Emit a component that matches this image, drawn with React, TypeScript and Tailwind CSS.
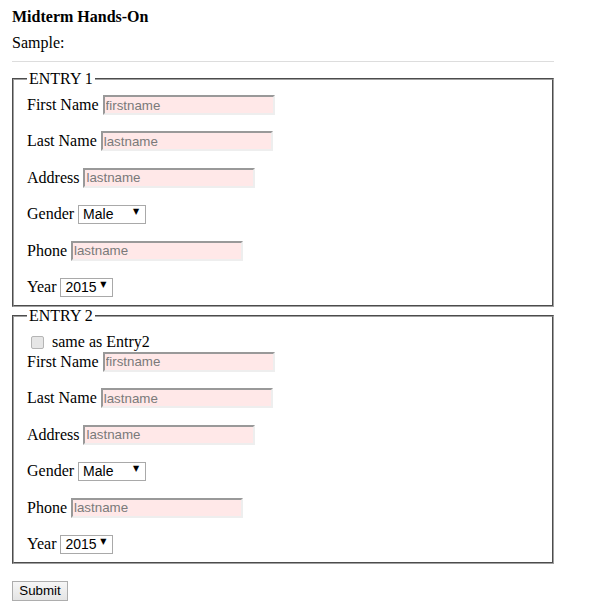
import React from "react";

const inputCls =
  "h-[20px] border-2 border-t-[#999] border-l-[#999] border-b-[#eee] border-r-[#eee] bg-[#ffe8e8] px-[1px] text-[13.33px] text-black placeholder:text-[#7a7a7a] outline-none [font-family:'Liberation_Sans',Arial,sans-serif]";

function TextRow({label, placeholder}: {label: string; placeholder: string}) {
  return (
    <div className="flex items-center gap-[4px] h-[20px]">
      <label className="leading-[18px]">{label}</label>
      <input type="text" placeholder={placeholder} className={inputCls + " w-[172px]"}/>
    </div>
  );
}

function SelectRow({label, options, width}: {label: string; options: string[]; width: string}) {
  return (
    <div className="flex items-center gap-[4px] h-[20px]">
      <label className="leading-[18px]">{label}</label>
      <div className="relative">
        <select
          className={
            "appearance-none h-[19px] border border-[#a9a9a9] bg-white pl-[4px] text-[14px] leading-[17px] text-black outline-none [font-family:'Liberation_Sans',Arial,sans-serif] " +
            width
          }
        >
          {options.map((o) => (
            <option key={o}>{o}</option>
          ))}
        </select>
        <span className="pointer-events-none absolute right-[7px] top-[5px] text-[8px] leading-[10px] text-black [font-family:'DejaVu_Sans',sans-serif]">
          ▼
        </span>
      </div>
    </div>
  );
}

function Entry({title, withCheck}: {title: string; withCheck?: boolean}) {
  return (
    <fieldset className="border-2 [border-style:groove] border-[#a0a0a0] px-[13px] pt-[7px] pb-[8px]">
      <legend className="px-[2px] leading-[18px]">{title}</legend>
      {withCheck && (
        <div className="flex items-center h-[19px] mt-[1px]">
          <input
            type="checkbox"
            className="appearance-none ml-[4px] mr-[8px] w-[13px] h-[13px] rounded-[2px] border border-[#b5b5b5] bg-[#e6e6e6]"
          />
          <span className="leading-[18px]">same as Entry2</span>
        </div>
      )}
      <div className="flex flex-col gap-[16.4px]">
        <TextRow label="First Name" placeholder="firstname"/>
        <TextRow label="Last Name" placeholder="lastname"/>
        <TextRow label="Address" placeholder="lastname"/>
        <SelectRow label="Gender" options={["Male", "Female"]} width="w-[68px]"/>
        <TextRow label="Phone" placeholder="lastname"/>
        <SelectRow label="Year" options={["2015", "2016", "2017"]} width="w-[53px]"/>
      </div>
    </fieldset>
  );
}

export default function App() {
  return (
    <div className="min-h-[608px] bg-white pl-3 pt-2 text-[16px] text-black [font-family:'Liberation_Serif','Times_New_Roman',serif]">
      <div className="w-[542px]">
        <h3 className="font-bold leading-[18px]">Midterm Hands-On</h3>
        <p className="mt-2 leading-[18px]">Sample:</p>
        <hr className="mt-[9px] border-0 border-t border-[#ddd]"/>
        <form className="mt-[8px]" onSubmit={(e) => e.preventDefault()}>
          <Entry title="ENTRY 1"/>
          <Entry title="ENTRY 2" withCheck/>
          <button
            type="submit"
            className="mt-[17px] h-[20px] w-[56px] border border-[#adadad] bg-gradient-to-b from-[#f6f6f6] to-[#e4e4e4] text-[13.33px] leading-[18px] text-black [font-family:'Liberation_Sans',Arial,sans-serif]"
          >
            Submit
          </button>
        </form>
      </div>
    </div>
  );
}
